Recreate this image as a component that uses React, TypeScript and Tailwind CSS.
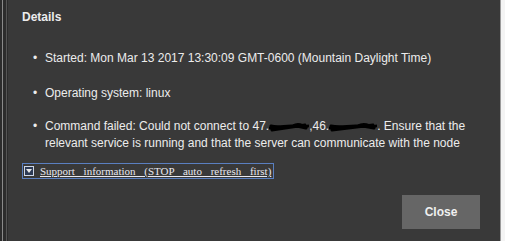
export default function App() {
  return (
    <div className="flex h-[241px] w-[505px] overflow-hidden bg-[#f0f0f0]" style={{ fontFamily: '"Liberation Sans", Arial, sans-serif' }}>
      {/* left frame strip */}
      <div className="flex h-full w-[8px] shrink-0 bg-[#2c2c2c]">
        <div className="ml-[2px] h-full w-[1px] bg-[#8a8a8a]" />
        <div className="ml-[3px] h-full w-[1px] bg-[#555]" />
      </div>

      <div className="relative flex h-full w-[492px] shrink-0 flex-col bg-[#393939] text-[#ececec]">
        <div className="pl-[14px] pt-[10px] text-[12px] font-bold leading-[15px]">Details</div>

        <ul className="mt-[25px] flex flex-col gap-[18px] pl-[25px] pr-[14px] text-[12px] leading-[17px]">
          <li className="flex">
            <span className="w-[12px] shrink-0">•</span>
            <span>Started: Mon Mar 13 2017 13:30:09 GMT-0600 (Mountain Daylight Time)</span>
          </li>
          <li className="flex">
            <span className="w-[12px] shrink-0">•</span>
            <span>Operating system: linux</span>
          </li>
          <li className="-mt-[2px] flex">
            <span className="w-[12px] shrink-0">•</span>
            <div className="flex flex-col">
              <span className="whitespace-nowrap">
                Command failed: Could not connect to 47.
                <Scribble w={40} />
                ,46.
                <Scribble w={48} />
                . Ensure that the
              </span>
              <span>relevant service is running and that the server can communicate with the node</span>
            </div>
          </li>
        </ul>

        <div className="mt-[11px] ml-[14px] flex h-[16px] w-fit items-center gap-[6px] border border-[#5a7fc0] pl-[1px] pr-[2px]" style={{ fontFamily: '"Liberation Serif", "Times New Roman", serif' }}>
          <span className="flex h-[10px] w-[10px] items-center justify-center border border-[#cfd8e8] bg-[#2c3a55]">
            <svg width="6" height="4" viewBox="0 0 6 4">
              <path d="M0 0 L6 0 L3 4 Z" fill="#e8e8e8" />
            </svg>
          </span>
          <span className="whitespace-nowrap text-[11px] leading-[14px] text-[#e8e8f0] underline [word-spacing:6px]">
            Support information (STOP auto refresh first)
          </span>
        </div>

        <div className="mt-auto mb-[12px] mr-[20px] flex justify-end">
          <button className="flex h-[34px] w-[78px] items-center justify-center bg-[#666666] text-[12px] font-bold text-[#f0f0f0]">
            Close
          </button>
        </div>
      </div>

      {/* right frame line */}
      <div className="h-full w-[1px] shrink-0 bg-[#9a9a9a]" />
      <div className="h-full flex-1 bg-[#f4f4f4]" />
    </div>
  );
}

function Scribble({ w }: { w: number }) {
  return (
    <svg width={w} height="10" viewBox={`0 0 ${w} 10`} className="inline-block align-middle">
      <path
        d={`M1 6 C ${w * 0.2} 2, ${w * 0.4} 9, ${w * 0.6} 4 S ${w * 0.85} 7, ${w - 1} 4 M2 4 C ${w * 0.3} 7, ${w * 0.5} 1, ${w - 3} 6 M3 8 L ${w - 4} 3`}
        stroke="#000"
        strokeWidth="3"
        fill="none"
        strokeLinecap="round"
      />
    </svg>
  );
}
